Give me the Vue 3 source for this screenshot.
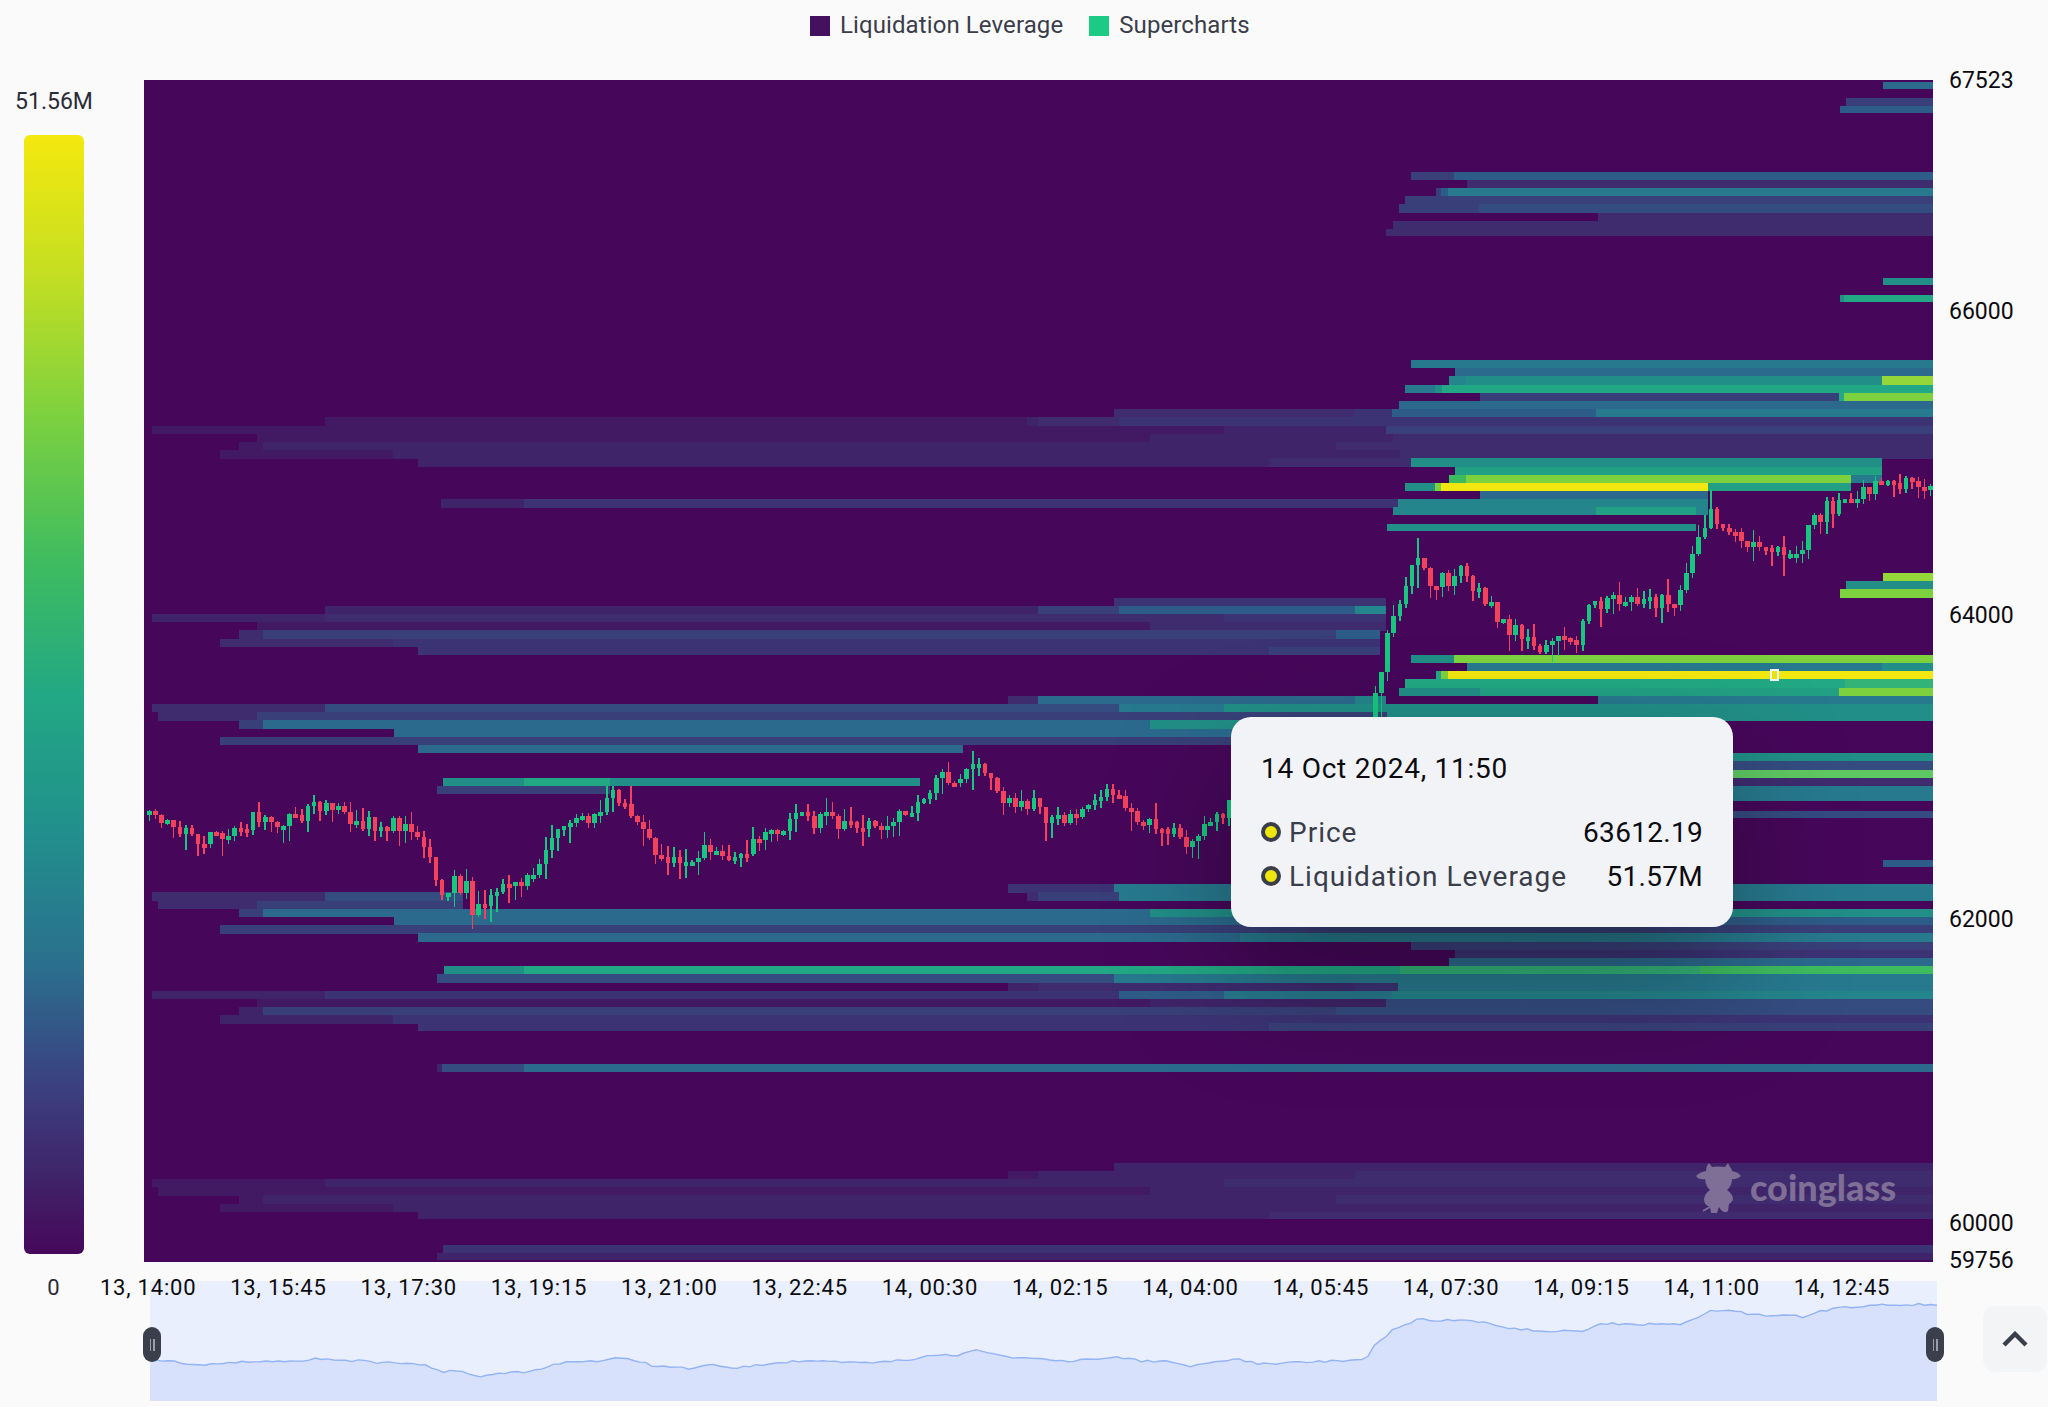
<script setup>
const palette = {
  1: '#411a63', a: '#3f2469', 2: '#3e2c6f', b: '#3c3375', 3: '#394079', c: '#344c80',
  4: '#2e5c88', d: '#2b6a8d', 5: '#27798e', e: '#24858c', 6: '#218f87', f: '#22a084',
  7: '#22a884', g: '#33b377', 8: '#3dbc5f', h: '#5ec962', 9: '#7dd13f', i: '#93d838', y: '#f2e70f'
}

const rows = [
  [0, '1883:d'], [2, '1846:3'], [3, '1840:4'],
  [11, '1411:3 1454:4'], [12, '1467:2'], [13, '1436:3 1441:4 1448:5'], [14, '1405:3'],
  [15, '1399:3 1479:c'], [16, '1598:2'], [17, '1393:2'], [18, '1386:2'],
  [24, '1883:6'], [26, '1840:6 1844:7'],
  [34, '1411:5'], [35, '1455:d'], [36, '1449:e 1466:6 1882:i'], [37, '1405:5 1435:6 1442:7'],
  [38, '1480:3 1839:7 1844:9'], [39, '1399:d'],
  [40, '1114:2 1355:b 1392:4 1596:5'], [41, '325:1 1027:a 1038:2 1119:b'],
  [42, '152:1 1224:a 1386:3'], [43, '257:1 1150:a 1393:2'], [44, '239:1 263:a 1336:2'], [45, '220:1 393:a 1400:2'],
  [46, '418:a 1269:2 1411:6 >1882'], [47, '1455:f >1882'], [48, '1449:8 1466:9 1851:5 >1882'],
  [49, '1405:6 1435:9 1441:y 1708:f >1851'], [50, '1480:d >1708'],
  [51, '441:a 524:b 1398:e >1708'], [52, '1393:e 1596:f 1696:e >1708'], [54, '1387:6 >1696'],
  [60, '1883:i'], [61, '1846:6'], [62, '1840:9'],
  [63, '1114:b >1386'], [64, '325:a 1038:3 1119:4 1355:e >1386'], [65, '152:a 325:2 1224:b >1386'],
  [66, '257:1 1150:2 >1386'], [67, '239:2 263:3 1336:4 >1380'], [68, '220:2 393:b >1380'], [69, '418:b 1269:3 >1380'],
  [70, '1411:6 1454:9'], [71, '1467:5 1882:6'], [72, '1436:7 1441:9 1448:y'], [73, '1405:7 1845:g'],
  [74, '1399:6 1480:f 1839:9'], [75, '1008:2 1038:d 1355:e >1386'], [75, '1598:5'],
  [76, '152:2 325:c 1119:5 1224:6'], [77, '158:2 257:3 1387:6'],
  [78, '239:3 263:d 1150:6 >1600'], [79, '394:d >1600'], [80, '220:3 >1600'], [81, '418:d >963'],
  [82, '1700:6'], [83, '1700:c'], [84, '1700:h'], [85, '443:6 524:7 610:6 >920'], [85, '1700:2'],
  [86, '437:3 >610'], [86, '1700:5'], [87, '1700:5'], [89, '1700:c'], [95, '1883:4'],
  [98, '1008:b 1114:5'], [99, '152:2 325:c >463'], [99, '1027:2 1038:3 1119:5'], [100, '158:2 257:3 >463'],
  [101, '239:3 263:d 1150:6'], [102, '394:d 1240:4'], [103, '220:3 1240:3'], [104, '418:d 1240:5'],
  [105, '1411:3'], [106, '1455:b'], [107, '1449:d'], [108, '444:6 524:7 1400:g 1700:8'],
  [109, '437:c 1114:5'], [110, '1008:a 1038:2 1355:b 1398:5'], [111, '152:a 325:b 1119:4 1224:5 1392:e'],
  [112, '257:1 1150:a 1386:c'], [113, '239:a 263:3 1336:c'], [114, '220:a 393:b'], [115, '418:b 1269:3'],
  [120, '437:a 442:c 524:d'],
  [132, '1114:a'], [133, '1008:1 1038:a 1355:2'], [134, '152:1 325:a 1224:2'], [135, '158:1 1150:a'],
  [136, '239:1 263:a 1336:2'], [137, '220:1 393:a'], [138, '418:a 1269:2'],
  [142, '443:b'], [143, '437:a']
]

const ROW_TOP = 81.6
const ROW_PITCH = 8.19
const rowSet = new Set(rows.map((r) => r[0]))

const segments = []
rows.forEach(([r, spec], n) => {
  let end = 1933
  const parts = spec.split(' ').filter((p) => {
    if (p[0] === '>') {
      end = Number(p.slice(1))
      return false
    }
    return true
  })
  parts.forEach((p, i) => {
    const [x, c] = p.split(':')
    const x0 = Number(x)
    const x1 = i + 1 < parts.length ? Number(parts[i + 1].split(':')[0]) : end
    segments.push({
      id: n + '-' + i,
      x: x0,
      y: ROW_TOP + r * ROW_PITCH,
      w: x1 - x0,
      h: rowSet.has(r + 1) ? 8.4 : 7.3,
      fill: palette[c]
    })
  })
})

// price path as [x, y] on the 1568-wide sketch; scaled up to the page
const way = [
  [113, 622], [130, 630], [152, 643], [175, 635], [190, 627], [210, 630], [245, 615], [262, 623], [290, 635],
  [310, 635], [325, 650], [335, 678], [345, 672], [367, 697], [385, 680], [405, 675], [415, 650], [430, 632],
  [455, 625], [468, 608], [488, 630], [498, 652], [525, 660], [540, 645], [555, 660], [580, 645], [605, 628],
  [625, 625], [650, 632], [672, 630], [695, 620], [712, 598], [730, 602], [742, 578], [765, 610], [790, 617],
  [815, 630], [850, 605], [870, 628], [895, 630], [905, 650], [925, 630], [940, 617], [960, 640], [1000, 630],
  [1040, 625], [1046, 560], [1052, 530], [1060, 490], [1072, 460], [1082, 430], [1095, 448], [1115, 435],
  [1135, 458], [1150, 480], [1175, 490], [1205, 490], [1222, 455], [1245, 460], [1280, 460], [1295, 425],
  [1305, 395], [1325, 405], [1345, 420], [1375, 425], [1385, 400], [1410, 380], [1440, 370], [1478, 372]
]
const SCALE = 2048 / 1568

function priceAt(px) {
  const x = px / SCALE
  for (let i = 1; i < way.length; i++) {
    if (x <= way[i][0]) {
      const [x0, y0] = way[i - 1]
      const [x1, y1] = way[i]
      return (y0 + ((x - x0) / (x1 - x0)) * (y1 - y0)) * SCALE
    }
  }
  return way[way.length - 1][1] * SCALE
}

let seed = 11
function rnd() {
  seed = (seed * 16807) % 2147483647
  return seed / 2147483647
}

const candles = []
const linePts = []
let prev = priceAt(147)
const COUNT = 293
for (let i = 0; i < COUNT; i++) {
  const x = 147 + i * 6.1
  const mid = priceAt(x)
  const swing = rnd() < 0.14 ? 30 : 15
  const close = mid + (rnd() - 0.5) * swing
  const top = Math.min(prev, close)
  const bottom = Math.max(prev, close)
  const up = close < prev
  const wickUp = rnd() * rnd() * 20
  const wickDown = rnd() * rnd() * 20
  candles.push({
    id: i,
    x,
    top,
    h: Math.max(bottom - top, 4),
    wickTop: top - wickUp,
    wickH: bottom - top + wickUp + wickDown + 2,
    fill: up ? '#17c77f' : '#f4415c'
  })
  linePts.push((i / (COUNT - 1)) * 1787 + ',' + (79 + (mid / SCALE - 622) * 0.22 + (rnd() - 0.5) * 2.4).toFixed(1))
  prev = close
}

// the tallest wicks of the series, read from the sketch as [x, top, bottom]
const peaks = [
  [1310, 375, 405], [1082, 412, 450], [742, 575, 605], [468, 602, 622],
  [367, 682, 702], [523, 650, 672], [1175, 478, 498], [1057, 518, 550]
]
peaks.forEach(([x, t, b]) => {
  const c = candles[Math.round((x * SCALE - 147) / 6.1)]
  c.wickTop = t * SCALE
  c.wickH = (b - t) * SCALE
})

const linePath = 'M' + linePts.join(' L')
const areaPath = linePath + ' L1787,120 L0,120 Z'

const yLabels = [67523, 66000, 64000, 62000, 60000, 59756].map((v) => ({
  v,
  top: 80.8 - 80 + (67523 - v) * 0.1519
}))

const xLabels = [
  '13, 14:00', '13, 15:45', '13, 17:30', '13, 19:15', '13, 21:00', '13, 22:45', '14, 00:30',
  '14, 02:15', '14, 04:00', '14, 05:45', '14, 07:30', '14, 09:15', '14, 11:00', '14, 12:45'
]
</script>

<template>
  <div class="page">
    <header class="legend">
      <span class="swatch swatch-lev"></span>
      <span class="legend-text">Liquidation Leverage</span>
      <span class="swatch swatch-super"></span>
      <span class="legend-text">Supercharts</span>
    </header>

    <main class="main">
      <aside class="scale">
        <div class="scale-max">51.56M</div>
        <div class="scale-bar"></div>
      </aside>

      <section class="plot">
        <svg class="plot-svg" viewBox="144 80 1789 1182" width="1789" height="1182">
          <rect x="144" y="80" width="1789" height="1182" fill="#46075a" />
          <rect
            v-for="s in segments"
            :key="s.id"
            :x="s.x"
            :y="s.y"
            :width="s.w"
            :height="s.h"
            :fill="s.fill"
            shape-rendering="crispEdges"
          />
          <g v-for="c in candles" :key="c.id" :fill="c.fill" shape-rendering="crispEdges">
            <rect :x="c.x + 1.5" :y="c.wickTop" width="1.5" :height="c.wickH" />
            <rect :x="c.x" :y="c.top" width="4.6" :height="c.h" />
          </g>
          <rect x="1771" y="670" width="7" height="10" fill="#e9e40f" stroke="#f5f5f5" stroke-width="2" />
        </svg>

        <div class="mark">
          <svg class="mark-cow" viewBox="0 0 45 51" width="45" height="51">
            <path
              d="M11 3 L13 0 L16 4 Q22 3 29 4 L32 0 L34 4 Q36 6 36 8 Q42 9 45 13 Q41 17 36 16 Q36 23 31 27 Q37 31 37 37 Q35 40 33 41 L32 48 Q29 51 25 47 L23 44 L21 50 L15 50 L14 44 Q8 42 8 36 Q9 30 14 27 Q10 24 9 16 Q3 17 0 13 Q4 9 10 8 Q10 5 11 3 Z"
              fill="#7f6f96"
            />
            <path d="M7 48 L14 44" stroke="#7f6f96" stroke-width="2" fill="none" />
          </svg>
          <span class="mark-text">coinglass</span>
        </div>

        <div class="tip">
          <div class="tip-date">14 Oct 2024, 11:50</div>
          <div class="tip-row">
            <span class="dot"></span>
            <span class="tip-label">Price</span>
            <span class="tip-value">63612.19</span>
          </div>
          <div class="tip-row">
            <span class="dot"></span>
            <span class="tip-label">Liquidation Leverage</span>
            <span class="tip-value">51.57M</span>
          </div>
        </div>
      </section>

      <aside class="yaxis">
        <span v-for="l in yLabels" :key="l.v" class="ylabel" :style="{ top: l.top + 'px' }">{{ l.v }}</span>
      </aside>
    </main>

    <footer class="bottom">
      <div class="xaxis">
        <span class="zero">0</span>
        <span v-for="t in xLabels" :key="t" class="xlabel">{{ t }}</span>
      </div>

      <div class="zoom">
        <svg class="zoom-svg" viewBox="0 0 1787 120" width="1787" height="120">
          <path :d="areaPath" fill="#d7e1fb" />
          <path :d="linePath" fill="none" stroke="#93b3f7" stroke-width="1.4" />
        </svg>
        <span class="handle handle-left"><i></i><i></i></span>
        <span class="handle handle-right"><i></i><i></i></span>
      </div>

      <button class="totop" type="button" aria-label="Back to top">
        <svg viewBox="0 0 28 16" width="28" height="16">
          <path d="M3 14 L14 3 L25 14" fill="none" stroke="#3a3f4b" stroke-width="4.4" />
        </svg>
      </button>
    </footer>
  </div>
</template>

<style scoped>
.page {
  width: 2048px;
  height: 1407px;
  overflow: hidden;
  display: flex;
  flex-direction: column;
  background: #fbfafb;
  font-family: Roboto, "Liberation Sans", sans-serif;
  color: #0b0b10;
}

.legend {
  height: 80px;
  box-sizing: border-box;
  padding: 12px 0 0 810px;
  display: flex;
  align-items: flex-start;
  font-size: 24px;
  line-height: 26px;
  letter-spacing: 0.1px;
  color: #3a3d4a;
}
.swatch {
  width: 20px;
  height: 20px;
  margin-top: 4px;
  flex: none;
}
.swatch-lev { background: #45105d; }
.swatch-super { background: #1ccb83; }
.legend-text { margin: 0 26px 0 10px; }

.main {
  display: grid;
  grid-template-columns: 144px 1789px 115px;
  height: 1182px;
  position: relative;
}

.scale {
  display: flex;
  flex-direction: column;
  align-items: center;
  padding-right: 36px;
}
.scale-max {
  margin-top: 8px;
  font-size: 23px;
  line-height: 28px;
  color: #2a2c36;
}
.scale-bar {
  margin-top: 19px;
  width: 60px;
  height: 1119px;
  border-radius: 6px;
  background: linear-gradient(
    180deg,
    #f4e80e 0%,
    #c6df21 12%,
    #7dd13f 25%,
    #3fbc5f 38%,
    #22a884 50%,
    #21908c 62%,
    #2a708e 74%,
    #3b4080 85%,
    #3f2469 93%,
    #46085a 100%
  );
}

.plot { position: relative; }
.plot-svg { display: block; }

.mark {
  position: absolute;
  left: 1552px;
  top: 1083px;
  display: flex;
  align-items: center;
  gap: 9px;
}
.mark-cow { display: block; }
.mark-text {
  font-family: Lato, sans-serif;
  font-weight: 900;
  font-size: 36px;
  line-height: 40px;
  margin-top: -4px;
  color: #7f6f96;
}

.tip {
  position: absolute;
  left: 1087px;
  top: 637px;
  width: 502px;
  height: 210px;
  box-sizing: border-box;
  padding: 34px 30px 0 30px;
  border-radius: 20px;
  background: #f2f3f7;
  box-shadow: 0 50px 120px rgba(0, 0, 0, 0.34);
}
.tip-date {
  font-size: 28px;
  line-height: 36px;
  letter-spacing: 0.75px;
  margin-bottom: 23px;
}
.tip-row {
  display: flex;
  align-items: center;
  height: 44px;
  font-size: 28px;
  letter-spacing: 0.3px;
}
.dot {
  width: 20px;
  height: 20px;
  box-sizing: border-box;
  border: 4px solid #3a3d4a;
  border-radius: 50%;
  background: #f0e60f;
  margin-right: 8px;
  flex: none;
}
.tip-label {
  color: #3a3d4a;
  letter-spacing: 1px;
}
.tip-value { margin-left: auto; }

.yaxis { position: relative; }
.ylabel {
  position: absolute;
  left: 16px;
  transform: translateY(-50%);
  font-size: 23px;
  line-height: 28px;
}

.bottom {
  position: relative;
  flex: 1;
}
.xaxis {
  position: relative;
  z-index: 1;
  display: flex;
  padding-top: 12px;
  font-size: 22px;
  line-height: 28px;
}
.zero {
  width: 83px;
  box-sizing: border-box;
  padding-left: 24px;
  text-align: center;
  color: #2a2c36;
}
.xlabel {
  width: 130.3px;
  flex: none;
  text-align: center;
  letter-spacing: 0.8px;
}

.zoom {
  position: absolute;
  left: 150px;
  top: 19px;
  width: 1787px;
  height: 120px;
  background: #eaeffd;
}
.zoom-svg { display: block; }
.handle {
  position: absolute;
  top: 46px;
  width: 18px;
  height: 35px;
  border-radius: 9px;
  background: #3a3f4b;
  display: flex;
  align-items: center;
  justify-content: center;
  gap: 2px;
}
.handle i {
  width: 1.5px;
  height: 12px;
  background: #9a9eaa;
}
.handle-left { left: -7px; }
.handle-right { left: 1776px; }

.totop {
  position: absolute;
  left: 1983px;
  top: 44px;
  width: 64px;
  height: 66px;
  padding: 0;
  border: 0;
  border-radius: 12px;
  background: #f3f4f6;
  display: flex;
  align-items: center;
  justify-content: center;
}
</style>
